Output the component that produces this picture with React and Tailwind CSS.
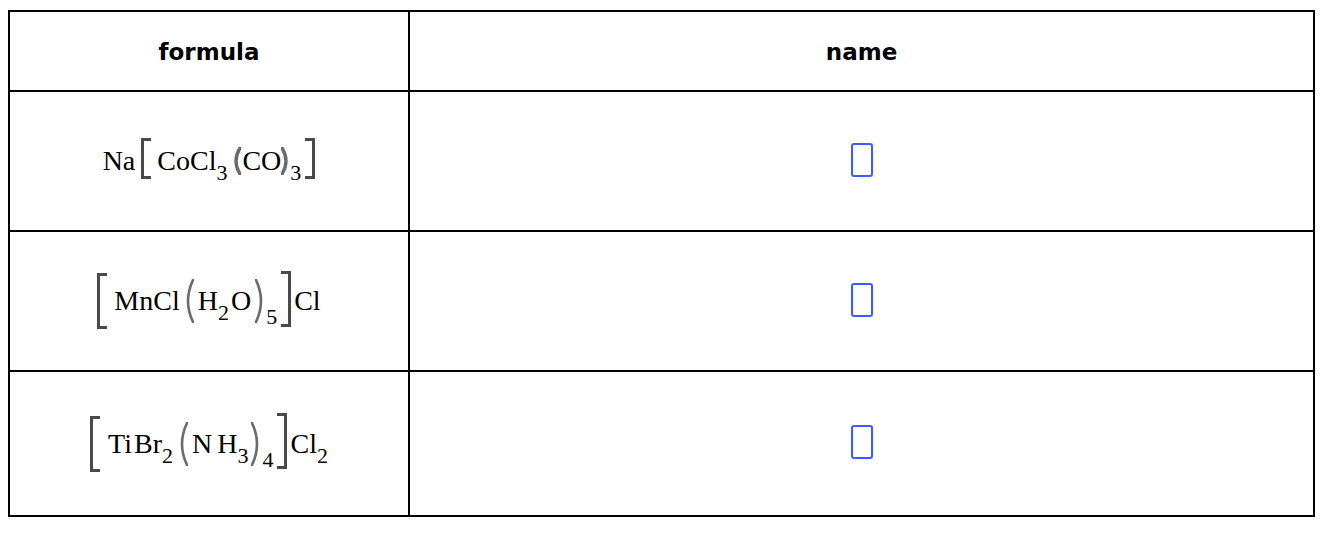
import React from 'react';

const serif = { fontFamily: '"Liberation Serif", "Times New Roman", serif' };

// square bracket drawn with borders
function Bracket({ side = 'left', h = 40 }) {
  const cls =
    side === 'left'
      ? 'inline-block w-[10px] border-l-[3px] border-t-[3px] border-b-[3px] border-[#4a4a4a]'
      : 'inline-block w-[10px] border-r-[3px] border-t-[3px] border-b-[3px] border-[#4a4a4a]';
  return <span className={cls} style={{ height: h }} />;
}

// round parenthesis drawn as svg
function Paren({ side = 'left', h = 26, w = 8, stroke = 2.4 }) {
  const d =
    side === 'left'
      ? `M ${w - 1} 1 Q 0 ${h / 2} ${w - 1} ${h - 1}`
      : `M 1 1 Q ${w} ${h / 2} 1 ${h - 1}`;
  return (
    <svg width={w} height={h} viewBox={`0 0 ${w} ${h}`} className="inline-block shrink-0">
      <path d={d} fill="none" stroke="#6b6b6b" strokeWidth={stroke} strokeLinecap="round" />
    </svg>
  );
}

function Sub({ children, down = 12 }) {
  return (
    <span className="relative text-[22px]" style={{ top: down }}>
      {children}
    </span>
  );
}

function Formula1() {
  return (
    <div className="flex items-center text-[28px] leading-none text-black" style={serif}>
      <span>Na</span>
      <span className="ml-[6px]"><Bracket h={41} /></span>
      <span className="ml-[6px]">CoCl</span>
      <Sub>3</Sub>
      <span className="ml-[5px] flex items-center"><Paren h={28} w={9} stroke={3.4} /></span>
      <span className="ml-[1px]">CO</span>
      <span className="flex items-center"><Paren side="right" h={28} w={9} stroke={3.4} /></span>
      <Sub>3</Sub>
      <span className="ml-[4px]"><Bracket side="right" h={41} /></span>
    </div>
  );
}

function Formula2() {
  return (
    <div className="flex items-center text-[28px] leading-none text-black" style={serif}>
      <Bracket h={56} />
      <span className="ml-[7px]">MnCl</span>
      <span className="ml-[3px] flex items-center"><Paren h={44} w={11} stroke={2.6} /></span>
      <span className="ml-[4px]">H</span>
      <Sub>2</Sub>
      <span className="ml-[2px]">O</span>
      <span className="ml-[4px] flex items-center"><Paren side="right" h={44} w={11} stroke={2.6} /></span>
      <Sub down={16}>5</Sub>
      <span className="ml-[4px]"><Bracket side="right" h={56} /></span>
      <span className="ml-[3px]">Cl</span>
    </div>
  );
}

function Formula3() {
  return (
    <div className="flex items-center text-[28px] leading-none text-black" style={serif}>
      <Bracket h={56} />
      <span className="ml-[8px]">Ti</span>
      <span className="ml-[2px]">Br</span>
      <Sub>2</Sub>
      <span className="ml-[4px] flex items-center"><Paren h={44} w={11} stroke={2.6} /></span>
      <span className="ml-[4px]">N</span>
      <span className="ml-[5px]">H</span>
      <Sub>3</Sub>
      <span className="ml-[3px] flex items-center"><Paren side="right" h={44} w={11} stroke={2.6} /></span>
      <Sub down={16}>4</Sub>
      <span className="ml-[4px]"><Bracket side="right" h={56} /></span>
      <span className="ml-[3px]">Cl</span>
      <Sub>2</Sub>
    </div>
  );
}

function AnswerBox() {
  return <div className="-mt-[3px] w-[22px] h-[34px] rounded-[3px] border-2 border-[#3d5afe]" />;
}

const rows = [<Formula1 key="1" />, <Formula2 key="2" />, <Formula3 key="3" />];

export default function App() {
  return (
    <div className="bg-white min-h-screen pl-[8px] pt-[10px]">
      <div
        className="w-[1307px] border-2 border-black grid grid-cols-[400px_1fr]"
        style={{ fontFamily: '"DejaVu Sans", Verdana, sans-serif' }}
      >
        <div className="h-[80px] pt-[3px] border-r-2 border-b-2 border-black flex items-center justify-center text-[23px] font-bold text-black">
          formula
        </div>
        <div className="h-[80px] pt-[3px] border-b-2 border-black flex items-center justify-center text-[23px] font-bold text-black">
          name
        </div>
        {rows.map((f, i) => {
          const last = i === rows.length - 1;
          return (
            <React.Fragment key={i}>
              <div
                className={
                  last
                    ? 'h-[143px] border-r-2 border-black flex items-center justify-center'
                    : 'h-[140px] border-r-2 border-b-2 border-black flex items-center justify-center'
                }
              >
                {f}
              </div>
              <div
                className={
                  last
                    ? 'h-[143px] flex items-center justify-center'
                    : 'h-[140px] border-b-2 border-black flex items-center justify-center'
                }
              >
                <AnswerBox />
              </div>
            </React.Fragment>
          );
        })}
      </div>
    </div>
  );
}
